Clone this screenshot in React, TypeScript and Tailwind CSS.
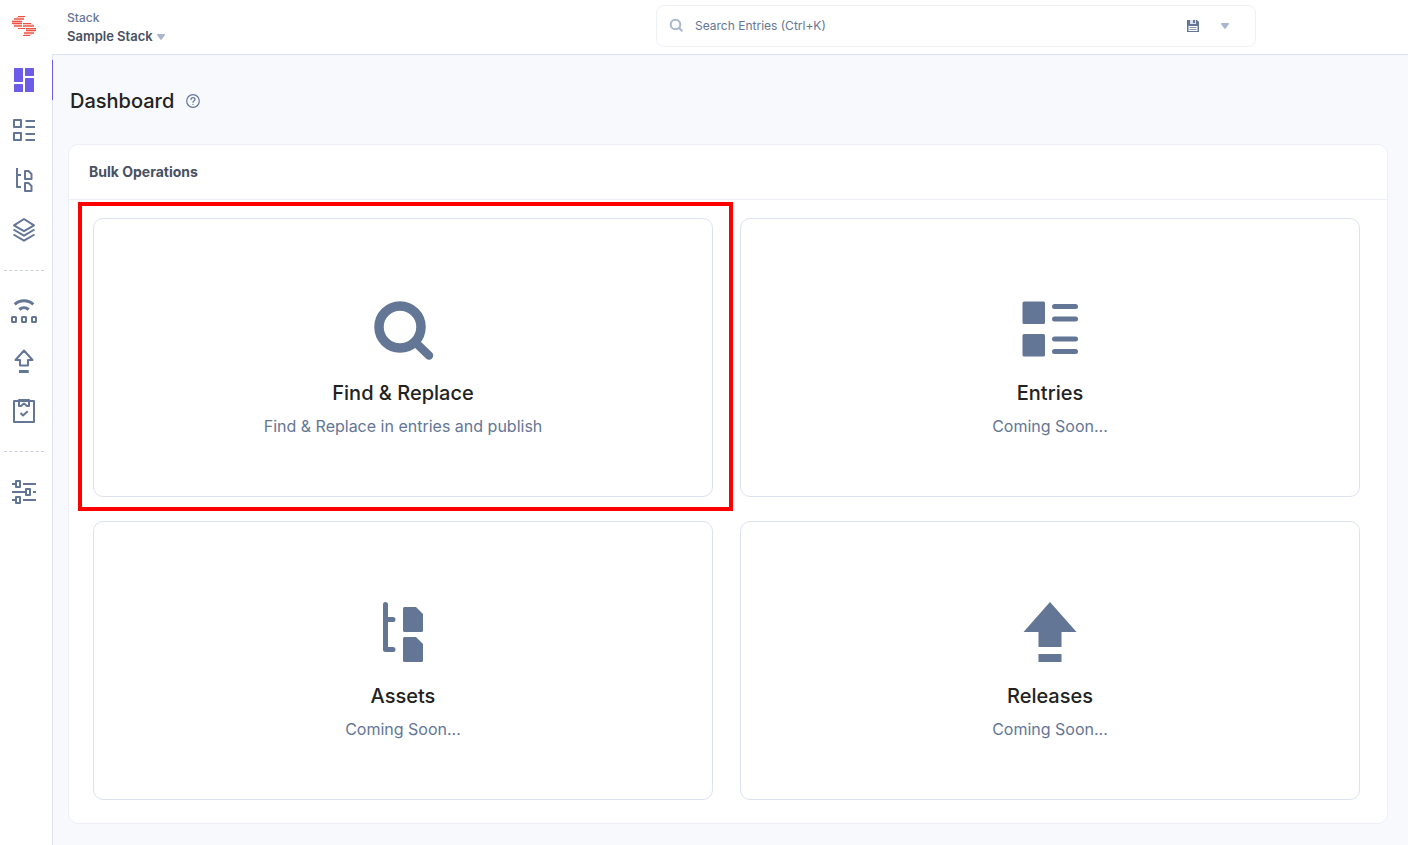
import type { ReactNode } from "react";

// x, y, width, height, opacity
const LOGO_STRIPES = [
  [18, 16, 7, 1, 1],
  [16, 17, 8, 1, 0.3],
  [14, 18, 10, 2, 0.75],
  [12, 20, 10, 1, 0.3],
  [12, 21, 10, 1, 1],
  [12, 22, 10, 1, 0.5],
  [12, 23, 10, 1, 1],
  [23, 23, 8, 1, 1],
  [13, 24, 9, 1, 0.3],
  [23, 24, 10, 1, 0.3],
  [14, 25, 8, 2, 0.75],
  [23, 25, 11, 2, 0.75],
  [18, 28, 7, 1, 1],
  [26, 28, 10, 1, 1],
  [26, 29, 10, 1, 0.5],
  [26, 30, 10, 1, 1],
  [26, 31, 9, 1, 0.3],
  [24, 32, 10, 2, 0.75],
  [24, 34, 8, 1, 0.3],
  [23, 35, 7, 1, 1],
];

const Logo = () => (
  <svg width="28" height="24" viewBox="10 14 28 24" fill="#ee5243" aria-hidden="true">
    {LOGO_STRIPES.map(([x, y, w, h, opacity]) => (
      <rect key={`${x}-${y}`} x={x} y={y} width={w} height={h} opacity={opacity} />
    ))}
  </svg>
);

const NavIcon = ({ children }: { children: ReactNode }) => (
  <svg
    width="28"
    height="28"
    viewBox="0 0 28 28"
    fill="none"
    stroke="currentColor"
    strokeWidth="2"
    strokeLinejoin="round"
    aria-hidden="true"
  >
    {children}
  </svg>
);

const DashboardIcon = () => (
  <NavIcon>
    <g fill="currentColor" stroke="none">
      <rect x="4" y="2" width="9" height="14" rx="0.5" />
      <rect x="4" y="18" width="9" height="8" rx="0.5" />
      <rect x="15" y="2" width="9" height="8" rx="0.5" />
      <rect x="15" y="12" width="9" height="14" rx="0.5" />
    </g>
  </NavIcon>
);

const EntriesIcon = () => (
  <NavIcon>
    <rect x="4" y="4" width="7" height="7" />
    <rect x="4" y="17" width="7" height="7" />
    <path d="M15.5 5H25M15.5 11H25M15.5 18H25M15.5 24H25" />
  </NavIcon>
);

const AssetsIcon = () => (
  <NavIcon>
    <path d="M7 2V21H11M7 9H11" />
    <path d="M15 5H18.5L21.5 8V13H15Z" />
    <path d="M15 17H18.5L21.5 20V25H15Z" />
  </NavIcon>
);

const LayersIcon = () => (
  <NavIcon>
    <path d="M14 3L24 9.3L14 15.2L4 9.3Z" />
    <path d="M3.5 13.5L14 19.7L24.5 13.5M3.5 18.5L14 24.7L24.5 18.5" />
  </NavIcon>
);

const PublishIcon = () => (
  <NavIcon>
    <path d="M4.7 7.3C10 2.4 18 2.4 23.3 7.3M9.3 12.5C12 10.2 16 10.2 18.7 12.5" strokeWidth="3" />
    <rect x="2" y="20" width="4" height="5" rx="0.5" />
    <rect x="12" y="20" width="4" height="5" rx="0.5" />
    <rect x="22" y="20" width="4" height="5" rx="0.5" />
  </NavIcon>
);

const ReleasesIcon = () => (
  <NavIcon>
    <path d="M14 3.5L22.5 13H18V18.5H10V13H5.5Z" />
    <path d="M9 24.5H18.7" strokeWidth="3" />
  </NavIcon>
);

const TasksIcon = () => (
  <NavIcon>
    <rect x="4" y="4" width="20" height="21" />
    <path d="M9 3V9H11L14 6.5L17 9H19V3Z" />
    <path d="M10.5 16L13 18.5L17.7 14.3" />
  </NavIcon>
);

const SettingsIcon = () => (
  <NavIcon>
    <path d="M2 6H6M13 6H26M2 14H16M23 14H26M2 22H6M13 22H26" />
    <rect x="6" y="3" width="4" height="6" />
    <rect x="16" y="11" width="4" height="6" />
    <rect x="6" y="19" width="4" height="6" />
  </NavIcon>
);

const CardIcon = ({ children }: { children: ReactNode }) => (
  <svg width="62" height="62" viewBox="0 0 62 62" fill="#647696" aria-hidden="true">
    {children}
  </svg>
);

const Caret = () => (
  <svg width="8" height="6" viewBox="0 0 8 6" fill="#a9b6cb" aria-hidden="true">
    <path d="M0.8 0H7.2C8 0 8.2 0.7 7.8 1.2L4.7 5.4C4.3 5.9 3.7 5.9 3.3 5.4L0.2 1.2C-0.2 0.7 0 0 0.8 0Z" />
  </svg>
);

const navGroups = [
  [
    { label: "Dashboard", icon: <DashboardIcon />, active: true },
    { label: "Entries", icon: <EntriesIcon /> },
    { label: "Assets", icon: <AssetsIcon /> },
    { label: "Content Models", icon: <LayersIcon /> },
  ],
  [
    { label: "Publish Queue", icon: <PublishIcon /> },
    { label: "Releases", icon: <ReleasesIcon /> },
    { label: "Tasks", icon: <TasksIcon /> },
  ],
  [{ label: "Settings", icon: <SettingsIcon /> }],
];

const operations = [
  {
    title: "Find & Replace",
    text: "Find & Replace in entries and publish",
    highlighted: true,
    icon: (
      <CardIcon>
        <g fill="none" stroke="#647696">
          <circle cx="28" cy="29" r="21" strokeWidth="9.5" />
          <path d="M43 44L57 57.5" strokeWidth="8.5" strokeLinecap="round" />
        </g>
      </CardIcon>
    ),
  },
  {
    title: "Entries",
    text: "Coming Soon...",
    icon: (
      <CardIcon>
        <rect x="3.5" y="3.5" width="22.5" height="22.5" rx="1.5" />
        <rect x="3.5" y="36" width="22.5" height="22.5" rx="1.5" />
        <rect x="33" y="6" width="26" height="5" rx="2.5" />
        <rect x="33" y="18.5" width="26" height="5" rx="2.5" />
        <rect x="33" y="38.5" width="26" height="5" rx="2.5" />
        <rect x="33" y="51" width="26" height="5" rx="2.5" />
      </CardIcon>
    ),
  },
  {
    title: "Assets",
    text: "Coming Soon...",
    icon: (
      <CardIcon>
        <path
          d="M13.5 3.5V48.5H21M13.5 18.5H21"
          fill="none"
          stroke="#647696"
          strokeWidth="5"
          strokeLinecap="round"
          strokeLinejoin="round"
        />
        <path d="M32.5 6H44L51 13V29.5Q51 31 49.5 31H32.5Q31 31 31 29.5V7.5Q31 6 32.5 6Z" />
        <path d="M32.5 36H44L51 43V59.5Q51 61 49.5 61H32.5Q31 61 31 59.5V37.5Q31 36 32.5 36Z" />
      </CardIcon>
    ),
  },
  {
    title: "Releases",
    text: "Coming Soon...",
    icon: (
      <CardIcon>
        <path d="M31 1L57.5 31H42.5V46H19.5V31H4.5Z" />
        <rect x="19.5" y="53" width="23" height="8" />
      </CardIcon>
    ),
  },
];

const Header = () => (
  <header className="flex h-[54px] items-start bg-white">
    <a href="#" aria-label="Home" className="flex w-[53px] shrink-0 pl-[10px] pt-[14px]">
      <Logo />
    </a>
    <div className="flex flex-col pl-[14px] pt-2">
      <span className="text-xs font-medium leading-[19px] text-[#647696]">Stack</span>
      <button
        type="button"
        className="flex items-center gap-1 text-[13px] font-semibold leading-[19px] text-[#475161]"
      >
        Sample Stack
        <Caret />
      </button>
    </div>
    <div className="ml-auto mr-[152px] mt-[5px] flex h-[42px] w-[600px] items-center rounded-lg border border-[#edf1f7] bg-white pl-3 pr-[26px]">
      <svg
        width="16"
        height="16"
        viewBox="0 0 16 16"
        fill="none"
        stroke="#a9b6cb"
        strokeWidth="2"
        strokeLinecap="round"
        aria-hidden="true"
      >
        <circle cx="6.5" cy="6.5" r="4.8" />
        <path d="M10.3 10.3L12.8 12.8" />
      </svg>
      <input
        type="text"
        aria-label="Search Entries"
        placeholder="Search Entries (Ctrl+K)"
        className="ml-[10px] min-w-0 flex-1 text-xs leading-5 text-[#475161] outline-none placeholder:text-[#647696]"
      />
      <button type="button" aria-label="Save search" className="mr-[22px]">
        <svg width="12" height="12" viewBox="0 0 12 12" aria-hidden="true">
          <path d="M0 0H10L12 2V12H0Z" fill="#647696" />
          <path d="M3 0H9V4H3Z" fill="#dde3ee" />
          <path d="M6 0H8V3H6Z" fill="#647696" />
          <path d="M1.5 6H10.5V11H1.5Z" fill="#fff" />
          <path d="M2.5 7.5H9.5M2.5 9.5H9.5" stroke="#8a98b2" />
        </svg>
      </button>
      <button type="button" aria-label="Saved searches">
        <Caret />
      </button>
    </div>
  </header>
);

const Sidebar = () => (
  <aside className="w-[53px] shrink-0 border-r border-[#dde3ee] bg-white">
    <nav className="flex flex-col gap-[10px] pt-[6px]">
      {navGroups.map((group, i) => (
        <div key={i} className="flex flex-col gap-[10px]">
          {i > 0 && (
            <div className="my-[10px] ml-1 w-10 border-t border-dashed border-[#c9d0dc]" />
          )}
          {group.map((item) => (
            <a
              key={item.label}
              href="#"
              aria-label={item.label}
              className={
                "active" in item
                  ? "-mr-px flex h-10 items-center border-r border-[#6c5ce7] pl-[10px] text-[#6c5ce7]"
                  : "flex h-10 items-center pl-[10px] text-[#647696]"
              }
            >
              {item.icon}
            </a>
          ))}
        </div>
      ))}
    </nav>
  </aside>
);

const App = () => {
  return (
    <div className="flex min-h-screen flex-col bg-white font-['Inter',sans-serif]">
      <Header />
      <div className="flex flex-1">
        <Sidebar />
        <main className="min-w-0 flex-1 border-t border-[#dde3ee] bg-[#f7f9fc] pb-5 pl-[15px] pr-5 pt-8">
          <div className="flex items-center gap-3 pl-[2px]">
            <h1 className="text-xl font-medium leading-7 text-[#222]">Dashboard</h1>
            <button type="button" aria-label="Help">
              <svg
                width="14"
                height="14"
                viewBox="0 0 14 14"
                fill="none"
                stroke="#647696"
                strokeWidth="1.2"
                strokeLinecap="round"
                aria-hidden="true"
              >
                <circle cx="7" cy="7" r="6.3" />
                <path d="M5 5.4C5 2.9 9 2.9 9 5.4C9 6.8 7 6.8 7 8.3M7 10.3V10.4" />
              </svg>
            </button>
          </div>

          <section className="mt-[29px] rounded-[10px] border border-[#edf1f7] bg-white">
            <h2 className="border-b border-[#edf1f7] px-5 py-[17px] text-sm font-bold leading-5 text-[#475161]">
              Bulk Operations
            </h2>
            <div className="grid grid-cols-2 gap-x-[27px] gap-y-6 pb-[23px] pl-6 pr-[27px] pt-[18px]">
              {operations.map((op) => (
                <button
                  key={op.title}
                  type="button"
                  className="relative flex flex-col items-center rounded-[10px] border border-[#dde3ee] bg-white pb-[58px] pt-[79px]"
                >
                  {op.icon}
                  <span className="mt-[19px] text-xl font-medium leading-7 text-[#222]">
                    {op.title}
                  </span>
                  <span className="mt-[7px] text-base leading-6 text-[#647696]">{op.text}</span>
                  {op.highlighted && (
                    <span className="pointer-events-none absolute -bottom-[15px] -left-4 -right-[21px] -top-[17px] border-4 border-[#ff0000]" />
                  )}
                </button>
              ))}
            </div>
          </section>
        </main>
      </div>
    </div>
  );
};

export default App;
